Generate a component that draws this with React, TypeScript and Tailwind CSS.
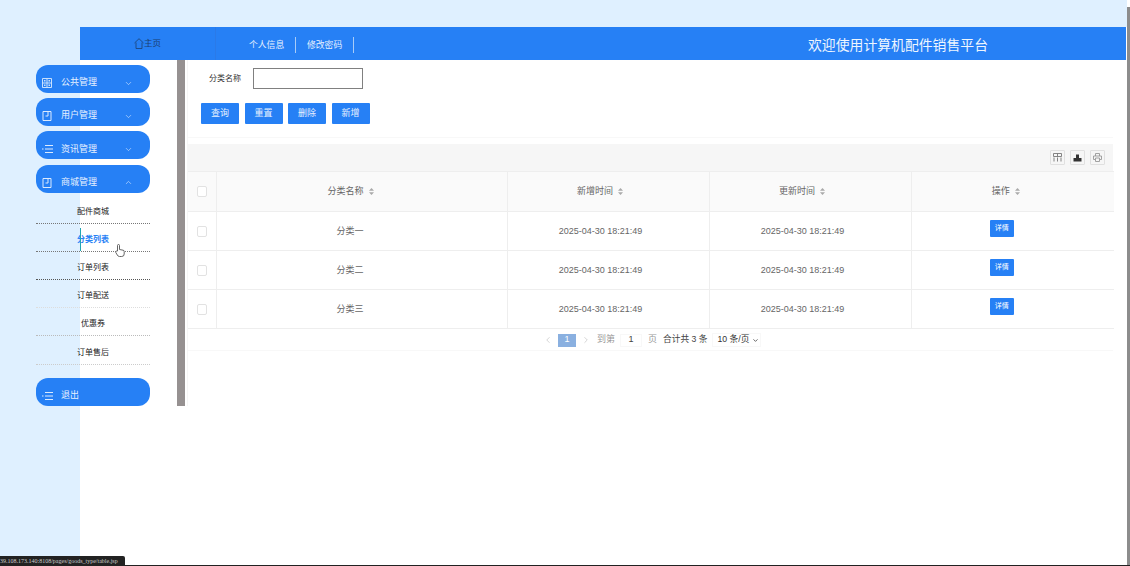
import React from 'react';
import { ChevronDown, ChevronUp, ChevronLeft, ChevronRight } from 'lucide-react';

const font = { fontFamily: '"Liberation Sans", "Noto Sans CJK SC", sans-serif' };

const GridIcon = () => (
  <svg width="10" height="10" viewBox="0 0 10 10" fill="none" stroke="#c9e0fc" strokeWidth="1">
    <path d="M0.5 0.5h9v9h-9zM5 0.5v9M0.5 5h9" />
    <path d="M2 2h1.5v1.5H2zM6.5 2H8v1.5H6.5zM2 6.5h1.5V8H2zM6.5 6.5H8V8H6.5z" fill="#c9e0fc" stroke="none" />
  </svg>
);

const BookIcon = () => (
  <svg width="10" height="10" viewBox="0 0 10 10" fill="none" stroke="#dbeafe" strokeWidth="1">
    <path d="M1 0.5h8v9H1z" />
    <path d="M6 0.5v4.5H3.5" />
  </svg>
);

const ListIcon = () => (
  <svg width="11" height="8" viewBox="0 0 11 8" fill="none" stroke="#dbeafe" strokeWidth="1">
    <path d="M3 0.5h8M3 4h8M3 7.5h8M0 4h1.5" />
  </svg>
);

const HomeIcon = () => (
  <svg width="10" height="11" viewBox="0 0 10 11" fill="none" stroke="#1c3f70" strokeWidth="0.8">
    <path d="M0.5 5L5 0.7 9.5 5M2 4.5v6h6v-6" />
  </svg>
);

const HandCursor = () => (
  <svg className="absolute left-[115px] top-[244px]" width="10" height="13" viewBox="0 0 10 13" fill="#ffffff" stroke="#555" strokeWidth="0.9">
    <path d="M2.5 7V1.5a1 1 0 0 1 2 0V5.5l3.5.7a1.3 1.3 0 0 1 1.2 1.4V10a2.5 2.5 0 0 1-2.5 2.5H4.5A2.5 2.5 0 0 1 2.3 11L.8 8.5c-.5-1 .9-2 1.7-1.5z" />
  </svg>
);

const MenuPill = ({ icon, label, open, arrow = true }: { icon: React.ReactNode; label: string; open?: boolean; arrow?: boolean }) => (
  <div className="flex h-[28px] w-[114px] items-center rounded-[12px] bg-[#2680f5] pl-[6px] pt-[8px] text-[9px] text-[#e6f1ff]">
    <span className="flex w-[19px] items-center">{icon}</span>
    <span className="w-[63px]">{label}</span>
    {arrow && (open ? <ChevronUp size={9} strokeWidth={1.5} /> : <ChevronDown size={9} strokeWidth={1.5} />)}
  </div>
);

const subMenu = [
  { label: '配件商城', line: 'border-[#777]', h: 'h-[28px]' },
  { label: '分类列表', line: 'border-[#777]', h: 'h-[28px]', active: true },
  { label: '订单列表', line: 'border-[#555]', h: 'h-[28px]' },
  { label: '订单配送', line: 'border-[#ddd]', h: 'h-[28px]' },
  { label: '优惠券', line: 'border-[#bbb]', h: 'h-[28px]' },
  { label: '订单售后', line: 'border-[#ccc]', h: 'h-[29px]' },
];

const Sort = () => (
  <svg className="ml-[5px] inline-block" width="5" height="7" viewBox="0 0 5 7" fill="#aaa">
    <path d="M2.5 0L5 2.8H0zM2.5 7L0 4.2h5z" />
  </svg>
);

const Check = () => <div className="mx-auto h-[11px] w-[10px] rounded-[2px] border border-[#e2e2e2] bg-white" />;

const rows = ['分类一', '分类二', '分类三'];
const date = '2025-04-30 18:21:49';

const ToolBtn = ({ children }: { children: React.ReactNode }) => (
  <div className="flex h-[15px] w-[15px] items-center justify-center rounded-[1px] border border-[#e0e0e0] text-[#444]">{children}</div>
);

export default function App() {
  return (
    <div
      className="relative h-[566px] w-[1130px] overflow-hidden bg-[linear-gradient(to_right,#dff0ff_80px,#ffffff_80px)]"
      style={font}
    >
      <div className="h-[27px] w-[1127px] bg-[#dff0ff]" />

      {/* Header */}
      <header className="ml-[80px] flex h-[33px] w-[1046px] items-center bg-[#2680f5] text-white">
        <div className="flex h-full w-[136px] items-center justify-end border-r border-[#2a7ae8] pb-[1px] pr-[54px] text-[8.5px] text-[#1c3f70]">
          <HomeIcon />
          <span>主页</span>
        </div>
        <div className="ml-[33px] flex items-center pt-[3px] text-[8.8px] text-[#e6f1ff]">
          <span className="w-[46px] pt-[1px]">个人信息</span>
          <span className="h-[16px] w-px bg-[#a8ccf8]" />
          <span className="ml-[11px] w-[46px] pt-[1px]">修改密码</span>
          <span className="h-[16px] w-px bg-[#a8ccf8]" />
        </div>
        <h1 className="ml-[454px] pt-[4px] text-[13.85px] font-normal text-[#eef6ff]">欢迎使用计算机配件销售平台</h1>
      </header>

      <div className="flex">
        {/* Sidebar */}
        <aside className="ml-[36px] mt-[5px] w-[114px]">
          <div className="flex flex-col gap-[5.2px]">
            <MenuPill icon={<GridIcon />} label="公共管理" />
            <MenuPill icon={<BookIcon />} label="用户管理" />
            <MenuPill icon={<ListIcon />} label="资讯管理" />
            <MenuPill icon={<BookIcon />} label="商城管理" open />
          </div>
          <ul className="mt-[3px]">
            {subMenu.map((m) => (
              <li
                key={m.label}
                className={`relative flex items-center justify-center border-b border-dotted pt-[6px] text-[8px] ${m.h} ${m.line} ${m.active ? 'font-bold text-[#2680f5]' : 'text-[#222]'}`}
              >
                {m.active && <span className="absolute bottom-0 left-[44px] h-[23px] w-px bg-[#22a6b3]" />}
                {m.label}
              </li>
            ))}
          </ul>
          <div className="mt-[13px]">
            <MenuPill icon={<ListIcon />} label="退出" arrow={false} />
          </div>
        </aside>

        {/* Divider bar */}
        <div className="ml-[27px] h-[346px] w-[8px] bg-[#969191]" />

        {/* Content */}
        <main className="ml-[2px] w-[926px] border-l border-[#f6f6f6]">
          <div className="h-[78px] border-b border-[#f8f8f8]">
            <div className="flex items-center pt-[8px]">
              <label className="ml-[21px] w-[44px] text-[8px] text-[#333]">分类名称</label>
              <input className="h-[21px] w-[110px] border border-[#808080] bg-white" />
            </div>
            <div className="ml-[13px] mt-[14px] flex gap-[5.5px]">
              {['查询', '重置', '删除', '新增'].map((b) => (
                <button key={b} className="h-[21px] w-[38px] rounded-[1px] bg-[#2680f5] text-[9px] text-[#e6f1ff]">
                  {b}
                </button>
              ))}
            </div>
          </div>

          <div className="mt-[6px] flex h-[27px] items-center justify-end gap-[5px] bg-[#f6f6f6] pr-[8px]">
            <ToolBtn>
              <svg width="9" height="9" viewBox="0 0 9 9" fill="none" stroke="#777" strokeWidth="0.9">
                <path d="M0.5 0.5h8v3h-8zM4.5 0.5v3M1 4.5v4M4.5 4.5v4M8 4.5v4" />
              </svg>
            </ToolBtn>
            <ToolBtn>
              <svg width="9" height="9" viewBox="0 0 9 9" fill="#333">
                <path d="M0.5 5h8v3.5h-8zM3 1.5h3V5H3z" />
              </svg>
            </ToolBtn>
            <ToolBtn>
              <svg width="9" height="9" viewBox="0 0 9 9" fill="none" stroke="#999" strokeWidth="0.9">
                <path d="M2.5 3V0.5h4V3M2 6.5H0.5V3h8v3.5H7M2.5 5h4v3.5h-4z" />
              </svg>
            </ToolBtn>
          </div>

          <table className="w-[926px] table-fixed text-[9px] text-[#666]">
            <colgroup>
              <col className="w-[28px]" />
              <col className="w-[291px]" />
              <col className="w-[202px]" />
              <col className="w-[202px]" />
              <col className="w-[203px]" />
            </colgroup>
            <thead>
              <tr className="h-[40px] bg-[#fafafa]">
                <th className="border border-l-0 border-[#eeeeee] font-normal"><Check /></th>
                <th className="border border-[#eeeeee] pr-[22px] font-normal">分类名称<Sort /></th>
                <th className="border border-[#eeeeee] pr-[16px] font-normal">新增时间<Sort /></th>
                <th className="border border-[#eeeeee] pr-[16px] font-normal">更新时间<Sort /></th>
                <th className="border border-r-0 border-[#eeeeee] pr-[14px] font-normal">操作<Sort /></th>
              </tr>
            </thead>
            <tbody>
              {rows.map((r) => (
                <tr key={r} className="h-[39px] border-b border-[#eeeeee] text-center">
                  <td className="border-r border-[#eeeeee]"><Check /></td>
                  <td className="border-r border-[#eeeeee] pr-[23px] pt-[1px]">{r}</td>
                  <td className="border-r border-[#eeeeee] pr-[15px] pt-[1px]">{date}</td>
                  <td className="border-r border-[#eeeeee] pr-[15px] pt-[1px]">{date}</td>
                  <td className="pb-[6px] pr-[22px]">
                    <button className="h-[17px] w-[24px] rounded-[1px] bg-[#2680f5] text-[7px] text-white">详情</button>
                  </td>
                </tr>
              ))}
            </tbody>
          </table>

          {/* Pagination */}
          <div className="flex h-[22px] items-center border-b border-[#f8f8f8] pl-[355px] pt-[1px] text-[9px] text-[#999]">
            <ChevronLeft size={10} strokeWidth={1.2} className="text-[#aaa]" />
            <span className="ml-[5px] flex h-[13px] w-[18px] items-center justify-center bg-[#8ab0e0] text-white">1</span>
            <ChevronRight size={10} strokeWidth={1.2} className="ml-[5px] text-[#aaa]" />
            <span className="ml-[6px]">到第</span>
            <span className="ml-[5px] flex h-[13px] w-[22px] items-center justify-center border border-[#f8f8f8] text-[#444]">1</span>
            <span className="ml-[6px]">页</span>
            <span className="ml-[6px] text-[8.7px] text-[#444]">合计共 3 条</span>
            <span className="ml-[5px] flex h-[14px] w-[49px] items-center justify-center border border-[#f8f8f8] pl-[3px] text-[8.7px] text-[#333]">
              10 条/页
              <ChevronDown size={7} strokeWidth={2.5} className="ml-[3px]" />
            </span>
          </div>
        </main>
      </div>

      {/* Cursor, browser scrollbar and status bar sit over the page */}
      <HandCursor />
      <div className="absolute right-0 top-[7px] h-[559px] w-[3px] bg-[#8c8c8c]" />
      <div className="absolute bottom-0 left-0 h-px w-[1130px] bg-[#222]" />
      <div className="absolute bottom-0 left-0 flex h-[10px] w-[125px] items-center whitespace-nowrap rounded-tr-[2px] bg-[#222] text-[6px] text-[#ccc]" style={{ fontFamily: '"Liberation Serif", serif' }}>
        39.108.173.140:8108/pages/goods_type/table.jsp
      </div>
    </div>
  );
}
